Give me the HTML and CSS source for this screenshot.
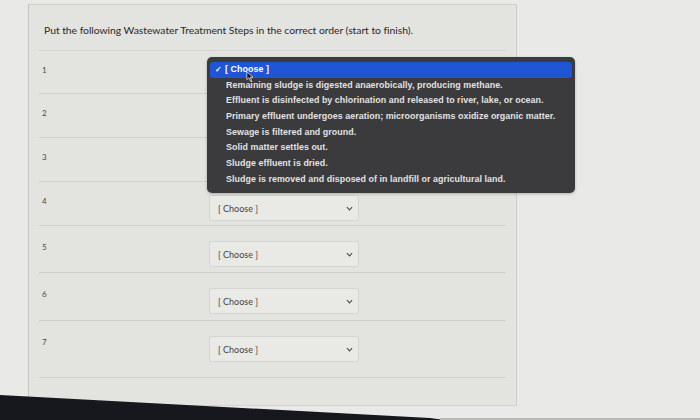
FILE: index.html
```html
<!DOCTYPE html>
<html>
<head>
<meta charset="utf-8">
<link rel="stylesheet" href="styles.css">
</head>
<body>
<div class="page">
  <div class="card">
    <p class="question">Put the following Wastewater Treatment Steps in the correct order (start to finish).</p>
    <div class="rows">
      <div class="row r1"><span class="num">1</span><div class="select covered"><span>[ Choose ]</span><svg class="chev" viewBox="0 0 8 5" width="7" height="5"><polyline points="1,1 4,4 7,1" fill="none" stroke="#555" stroke-width="1.4"/></svg></div></div>
      <div class="row r2"><span class="num">2</span><div class="select covered"><span>[ Choose ]</span><svg class="chev" viewBox="0 0 8 5" width="7" height="5"><polyline points="1,1 4,4 7,1" fill="none" stroke="#555" stroke-width="1.4"/></svg></div></div>
      <div class="row r3"><span class="num">3</span><div class="select covered"><span>[ Choose ]</span><svg class="chev" viewBox="0 0 8 5" width="7" height="5"><polyline points="1,1 4,4 7,1" fill="none" stroke="#555" stroke-width="1.4"/></svg></div></div>
      <div class="row r4"><span class="num">4</span><div class="select"><span>[ Choose ]</span><svg class="chev" viewBox="0 0 8 5" width="7" height="5"><polyline points="1,1 4,4 7,1" fill="none" stroke="#555" stroke-width="1.4"/></svg></div></div>
      <div class="row r5"><span class="num">5</span><div class="select"><span>[ Choose ]</span><svg class="chev" viewBox="0 0 8 5" width="7" height="5"><polyline points="1,1 4,4 7,1" fill="none" stroke="#555" stroke-width="1.4"/></svg></div></div>
      <div class="row r6"><span class="num">6</span><div class="select"><span>[ Choose ]</span><svg class="chev" viewBox="0 0 8 5" width="7" height="5"><polyline points="1,1 4,4 7,1" fill="none" stroke="#555" stroke-width="1.4"/></svg></div></div>
      <div class="row r7"><span class="num">7</span><div class="select"><span>[ Choose ]</span><svg class="chev" viewBox="0 0 8 5" width="7" height="5"><polyline points="1,1 4,4 7,1" fill="none" stroke="#555" stroke-width="1.4"/></svg></div></div>
    </div>
  </div>
</div>

<ul class="menu">
  <li class="item selected"><span class="check">✓</span>[ Choose ]</li>
  <li class="item">Remaining sludge is digested anaerobically, producing methane.</li>
  <li class="item">Effluent is disinfected by chlorination and released to river, lake, or ocean.</li>
  <li class="item">Primary effluent undergoes aeration; microorganisms oxidize organic matter.</li>
  <li class="item">Sewage is filtered and ground.</li>
  <li class="item">Solid matter settles out.</li>
  <li class="item">Sludge effluent is dried.</li>
  <li class="item">Sludge is removed and disposed of in landfill or agricultural land.</li>
</ul>

<svg class="cursor" viewBox="0 0 10 14" width="8" height="11"><path d="M1 1 L1 11 L3.6 8.6 L5.4 12.6 L7 11.9 L5.3 8 L8.8 8 Z" fill="#111" stroke="#fff" stroke-width="0.9" stroke-linejoin="round"/></svg>

<div class="bezel"></div>
<div class="bezel-edge"></div>
</body>
</html>
```
FILE: styles.css
```css
html, body {
  margin: 0;
  padding: 0;
}
body {
  width: 700px;
  height: 420px;
  overflow: hidden;
  position: relative;
  background: #e9e9e7;
  font-family: Lato, "Liberation Sans", sans-serif;
  color: #333;
}
.page {
  padding: 4px 0 0 28px;
}
.card {
  width: 489px;
  height: 402px;
  background: #e3e3e0;
  border-top: 1px solid #cfcfcb;
  border-left: 1px solid #c4c4c0;
  border-right: 1px solid #cdcdc9;
  border-bottom: 1px solid #d2d2ce;
  box-sizing: border-box;
}
.question {
  margin: 0 0 0 15px;
  padding-top: 19px;
  height: 26px;
  font-size: 10.4px;
  color: #2a2a2a;
  letter-spacing: -0.05px;
}
.rows {
  margin: 0 10px 0 10px;
  border-top: 1px solid #d3d3cf;
}
.row {
  display: grid;
  grid-template-columns: 167px 150px;
  align-items: start;
  padding: 13px 0 0 3px;
  box-sizing: border-box;
  border-bottom: 1px solid #d0d0cc;
}
.r1 { height: 43px; }
.r2 { height: 44px; }
.r3 { height: 44px; }
.r4 { height: 44px; }
.r5 { height: 47px; padding-top: 15px; }
.r6 { height: 48px; padding-top: 15px; }
.r7 { height: 57px; padding-top: 15px; }
.num {
  font-size: 8px;
  color: #4a4a4a;
  padding-top: 1px;
}
.select {
  height: 26px;
  border: 1px solid #d4d4d0;
  border-radius: 2px;
  background: #e9e9e6;
  box-sizing: border-box;
  display: flex;
  align-items: center;
  justify-content: space-between;
  padding: 0 5px 0 8px;
  font-size: 9px;
  color: #444;
}
.covered {
  visibility: hidden;
}
.chev {
  display: block;
}
.menu {
  position: absolute;
  left: 207px;
  top: 57px;
  width: 368px;
  margin: 0;
  padding: 5px 3px 5px 3px;
  box-sizing: border-box;
  list-style: none;
  background: #3b3b3e;
  border-radius: 5px;
  box-shadow: 0 1px 3px rgba(0,0,0,0.25);
  font-family: "Liberation Sans", Arial, sans-serif;
  font-size: 8.9px;
  font-weight: bold;
  color: #e2e2e2;
}
.item {
  height: 15.7px;
  line-height: 15.7px;
  padding-left: 16px;
  white-space: nowrap;
  letter-spacing: 0.05px;
}
.item.selected {
  background: #1f56d6;
  border-radius: 3px;
  color: #fff;
  padding-left: 5px;
}
.check {
  display: inline-block;
  width: 10px;
  font-size: 8px;
}
.cursor {
  position: absolute;
  left: 246px;
  top: 71px;
}
.bezel {
  position: absolute;
  left: 0;
  bottom: 0;
  width: 700px;
  height: 27px;
  background: #16181d;
  clip-path: polygon(0 2px, 430px 25px, 445px 27px, 0 27px);
}
.bezel-edge {
  position: absolute;
  left: 440px;
  right: 0;
  bottom: 0;
  height: 2px;
  background: #b9b9b7;
}
```
